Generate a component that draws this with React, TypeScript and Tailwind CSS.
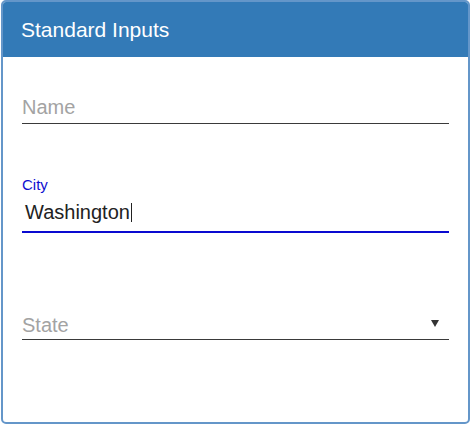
import React from 'react';

const font = { fontFamily: '"Liberation Sans", Arial, sans-serif' };

const Caret = () => (
  <span className="inline-block w-px h-[19px] bg-[#222] align-[-3px] ml-[1px]" />
);

const DropArrow = () => (
  <svg width="8" height="7" viewBox="0 0 8 7" className="block">
    <path d="M0 0 H8 L4 7 Z" fill="#333" />
  </svg>
);

export default function App() {
  return (
    <div className="bg-white w-[474px] h-[428px]" style={font}>
      <div className="ml-[1px] w-[469px] h-[424px] border-2 border-[#6496c9] rounded-[5px] overflow-hidden flex flex-col bg-white">
        {/* Panel heading */}
        <div className="h-[55px] shrink-0 bg-[#337ab7] pl-[18px] text-white text-[21px] leading-[55px]">
          Standard Inputs
        </div>

        {/* Panel body */}
        <div className="px-[19px] pt-[37px]">
          {/* Name */}
          <div className="h-[30px] border-b border-[#3a3a3a] text-[20px] leading-[27px] text-[#a3a3a3]">
            Name
          </div>

          {/* City (focused) */}
          <div className="mt-[51px]">
            <div className="h-[24px] text-[15px] leading-[20px] text-[#1010d0]">City</div>
            <div className="h-[34px] border-b-2 border-[#0a0ad0] pl-[3px] text-[20px] leading-[27px] text-[#222]">
              Washington
              <Caret />
            </div>
          </div>

          {/* State select */}
          <div className="mt-[79px] h-[28px] border-b border-[#3a3a3a] flex items-start justify-between">
            <span className="text-[20px] leading-[27px] text-[#a3a3a3]">State</span>
            <span className="mt-[8px] mr-[10px]">
              <DropArrow />
            </span>
          </div>
        </div>
      </div>
    </div>
  );
}
